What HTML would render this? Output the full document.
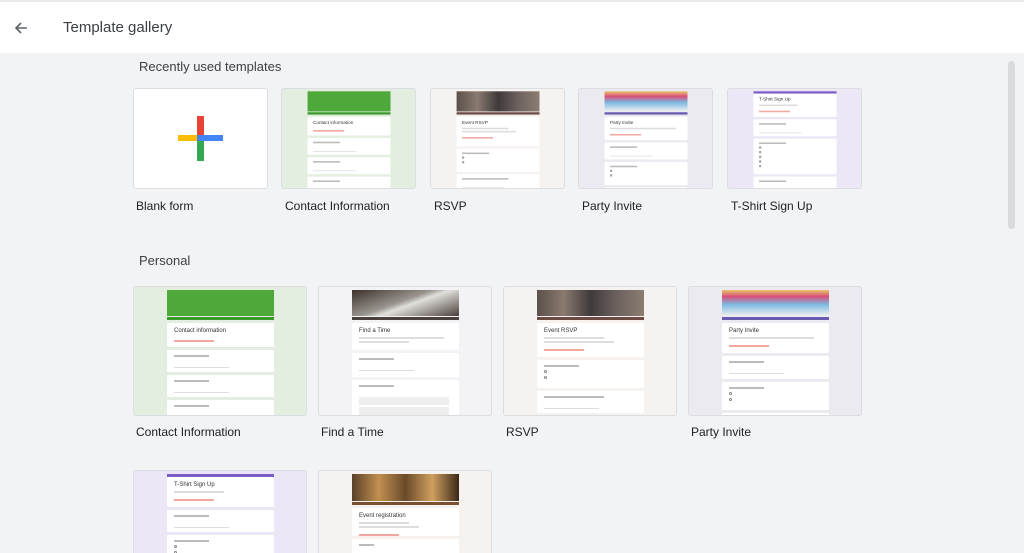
<!DOCTYPE html>
<html><head><meta charset="utf-8"><style>
*{box-sizing:border-box;margin:0;padding:0}
html,body{width:1024px;height:553px;overflow:hidden}
body{background:#f2f3f5;font-family:"Liberation Sans",Arial,sans-serif;position:relative;color:#202124}
.top{position:absolute;left:0;top:0;width:1024px;height:2px;background:#ece9ea}
.hdr{position:absolute;left:0;top:2px;width:1024px;height:51px;background:#fff}
.hdr .t{position:absolute;left:63px;top:17px;font-size:15px;color:#3c4043}
.sb{position:absolute;left:1008px;top:61px;width:7px;height:168px;background:#d9dadd;border-radius:4px}
.h2{position:absolute;left:139px;font-size:13px;color:#3c4043}
.card{position:absolute;border:1px solid #dcdde0;border-radius:3px;overflow:hidden;background:#fff}
.rc{width:135px;height:101px}
.pc{width:174px;height:130px}
.pc.cut{height:83px;border-bottom:none;border-radius:3px 3px 0 0}
.lbl{position:absolute;font-size:12px;color:#202124}
.th{position:absolute;left:0;top:0;width:173px;height:129px;transform-origin:0 0}
.rc .th{transform:scale(0.775)}
.col{position:absolute;left:33px;top:3px;width:107px}
.img{height:26px}
.bar{height:3px;margin-top:1px}
.box{background:#fff;margin-top:3px;border-radius:1px;padding:5px 7px;position:relative}
.tt{font-size:6px;color:#333;margin-bottom:3px}
.ln{height:2px;background:#ddd;margin:2px 0}
.rq{height:1.5px;width:40px;background:#f2a7a0;margin-top:6px}
.q{height:2px;width:35px;background:#bbb}
.a{height:1px;width:55px;background:#ddd;margin-top:10px}
.r{width:3px;height:3px;border:0.6px solid #888;border-radius:50%;margin-top:3px}
</style></head><body>
<div class="top"></div>
<div class="hdr">
<svg style="position:absolute;left:13px;top:18px" width="16" height="16" viewBox="0 0 16 16"><path d="M14 8H3M8 3L3 8l5 5" stroke="#5f6368" stroke-width="1.6" fill="none"/></svg>
<div class="t">Template gallery</div></div>
<div class="sb"></div>

<div class="h2" style="top:59px">Recently used templates</div>

<div class="card rc" style="left:133px;top:88px">
<div style="position:absolute;left:44px;top:46px;width:20px;height:6px;background:#fbbc04"></div>
<div style="position:absolute;left:63px;top:27px;width:7px;height:21px;background:#ea4335"></div>
<div style="position:absolute;left:63px;top:46px;width:26px;height:6px;background:#4285f4"></div>
<div style="position:absolute;left:63px;top:52px;width:7px;height:20px;background:#34a853"></div>
</div>
<div class="lbl" style="left:136px;top:199px">Blank form</div>

<div class="card rc" style="left:281px;top:88px;background:#e3eee0"><div class="th">
<div class="col"><div class="img" style="background:#4ea83a;height:26px"></div><div class="bar" style="background:#3a9a2a"></div>
<div class="box"><div class="tt">Contact information</div><div class="rq"></div></div>
<div class="box" style="height:22px"><div class="q"></div><div class="a"></div></div>
<div class="box" style="height:22px"><div class="q"></div><div class="a"></div></div>
<div class="box" style="height:22px"><div class="q"></div><div class="a"></div></div></div></div></div>
<div class="lbl" style="left:285px;top:199px">Contact Information</div>

<div class="card rc" style="left:430px;top:88px;background:#f6f2f0"><div class="th">
<div class="col"><div class="img" style="background:linear-gradient(90deg,#5b5048,#8a7a70,#3f3a3a,#6d6260,#8b7d70)"></div><div class="bar" style="background:#6b4a44"></div>
<div class="box" style="height:38px"><div class="tt">Event RSVP</div><div class="ln" style="width:60px"></div><div class="ln" style="width:70px"></div><div class="rq"></div></div>
<div class="box" style="height:30px"><div class="q"></div><div class="r"></div><div class="r"></div></div>
<div class="box" style="height:22px"><div class="q" style="width:60px"></div><div class="a"></div></div>
<div class="box" style="height:20px"></div></div></div></div>
<div class="lbl" style="left:434px;top:199px">RSVP</div>

<div class="card rc" style="left:578px;top:88px;background:#ebeaf0"><div class="th">
<div class="col"><div class="img" style="background:linear-gradient(180deg,#e9c46a 0,#d94f7a 25%,#7bb8e0 55%,#f0f0f0 100%)"></div><div class="bar" style="background:#6a5bb0"></div>
<div class="box" style="height:30px"><div class="tt">Party Invite</div><div class="ln" style="width:85px"></div><div class="rq"></div></div>
<div class="box" style="height:22px"><div class="q"></div><div class="a"></div></div>
<div class="box" style="height:30px"><div class="q"></div><div class="r"></div><div class="r"></div></div>
<div class="box" style="height:20px"><div class="q" style="width:50px"></div></div></div></div></div>
<div class="lbl" style="left:582px;top:199px">Party Invite</div>

<div class="card rc" style="left:727px;top:88px;background:#ece7f6"><div class="th">
<div class="col"><div class="bar" style="background:#7b5cc4;margin-top:0"></div>
<div class="box" style="height:30px;margin-top:0"><div class="tt">T-Shirt Sign Up</div><div class="ln" style="width:50px"></div><div class="rq"></div></div>
<div class="box" style="height:22px"><div class="q"></div><div class="a"></div></div>
<div class="box" style="height:46px"><div class="q"></div><div class="r"></div><div class="r"></div><div class="r"></div><div class="r"></div><div class="r"></div></div>
<div class="box" style="height:30px"><div class="q"></div><div style="position:absolute;left:40px;top:20px;width:26px;height:12px;border-radius:10px 10px 0 0;background:#4a3a7a"></div></div></div></div></div>
<div class="lbl" style="left:731px;top:199px">T-Shirt Sign Up</div>

<div class="h2" style="top:253px">Personal</div>

<div class="card pc" style="left:133px;top:286px;background:#e3eee0"><div class="th">
<div class="col"><div class="img" style="background:#4ea83a"></div><div class="bar" style="background:#3a9a2a"></div>
<div class="box"><div class="tt">Contact information</div><div class="rq"></div></div>
<div class="box" style="height:22px"><div class="q"></div><div class="a"></div></div>
<div class="box" style="height:22px"><div class="q"></div><div class="a"></div></div>
<div class="box" style="height:22px"><div class="q"></div><div class="a"></div></div></div></div></div>
<div class="lbl" style="left:136px;top:425px">Contact Information</div>

<div class="card pc" style="left:318px;top:286px;background:#f3f3f5"><div class="th">
<div class="col"><div class="img" style="background:linear-gradient(160deg,#3a302c,#9a9590 45%,#e0e0dc 55%,#4a3f3a)"></div><div class="bar" style="background:#4a403c"></div>
<div class="box" style="height:27px"><div class="tt">Find a Time</div><div class="ln" style="width:85px"></div><div class="ln" style="width:50px"></div></div>
<div class="box" style="height:24px"><div class="q"></div><div class="a"></div></div>
<div class="box" style="height:40px"><div class="q"></div><div class="ln" style="width:90px;margin-top:10px;background:#eee;height:8px"></div><div class="ln" style="width:90px;background:#eee;height:8px"></div></div></div></div></div>
<div class="lbl" style="left:321px;top:425px">Find a Time</div>

<div class="card pc" style="left:503px;top:286px;background:#f6f2f0"><div class="th">
<div class="col"><div class="img" style="background:linear-gradient(90deg,#5b5048,#8a7a70,#3f3a3a,#6d6260,#8b7d70)"></div><div class="bar" style="background:#6b4a44"></div>
<div class="box" style="height:34px"><div class="tt">Event RSVP</div><div class="ln" style="width:60px"></div><div class="ln" style="width:70px"></div><div class="rq"></div></div>
<div class="box" style="height:28px"><div class="q"></div><div class="r"></div><div class="r"></div></div>
<div class="box" style="height:22px"><div class="q" style="width:60px"></div><div class="a"></div></div>
<div class="box" style="height:20px"></div></div></div></div>
<div class="lbl" style="left:506px;top:425px">RSVP</div>

<div class="card pc" style="left:688px;top:286px;background:#ebeaf0"><div class="th">
<div class="col"><div class="img" style="background:linear-gradient(180deg,#e9c46a 0,#d94f7a 25%,#7bb8e0 55%,#f0f0f0 100%)"></div><div class="bar" style="background:#6a5bb0"></div>
<div class="box" style="height:30px"><div class="tt">Party Invite</div><div class="ln" style="width:85px"></div><div class="rq"></div></div>
<div class="box" style="height:23px"><div class="q"></div><div class="a"></div></div>
<div class="box" style="height:28px"><div class="q"></div><div class="r"></div><div class="r"></div></div>
<div class="box" style="height:20px"><div class="q" style="width:50px"></div></div></div></div></div>
<div class="lbl" style="left:691px;top:425px">Party Invite</div>

<div class="card pc cut" style="left:133px;top:470px;background:#ece7f6"><div class="th">
<div class="col"><div class="bar" style="background:#7b5cc4;margin-top:0"></div>
<div class="box" style="height:30px;margin-top:0"><div class="tt">T-Shirt Sign Up</div><div class="ln" style="width:50px"></div><div class="rq"></div></div>
<div class="box" style="height:22px"><div class="q"></div><div class="a"></div></div>
<div class="box" style="height:46px"><div class="q"></div><div class="r"></div><div class="r"></div></div></div></div></div>

<div class="card pc cut" style="left:318px;top:470px;background:#f6f2f0"><div class="th">
<div class="col"><div class="img" style="background:linear-gradient(90deg,#5a4028,#c09050,#6a4a2a,#d0a060,#3a2818);height:27px"></div><div class="bar" style="background:#7a5030"></div>
<div class="box" style="height:28px"><div class="tt">Event registration</div><div class="ln" style="width:50px"></div><div class="ln" style="width:60px"></div><div class="rq"></div></div>
<div class="box" style="height:22px"><div class="q" style="width:15px"></div></div></div></div></div>
</body></html>
